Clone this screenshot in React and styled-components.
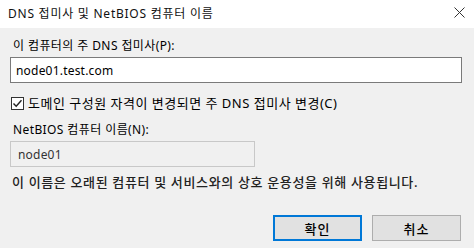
import React from 'react';
import styled, { createGlobalStyle } from 'styled-components';

const GlobalStyle = createGlobalStyle`
  html, body {
    margin: 0;
    padding: 0;
    background: #f0f0f0;
  }
  body {
    font-family: 'Noto Sans', 'Noto Sans CJK KR', sans-serif;
    font-size: 12px;
    color: #000;
  }
`;

export default function App() {
  return (
    <>
      <GlobalStyle />
      <Window>
        <TitleBar>
          <Title>DNS 접미사 및 NetBIOS 컴퓨터 이름</Title>
          <CloseButton aria-label="닫기">
            <svg width="11" height="11" viewBox="0 0 11 11">
              <path d="M0.5 0.5 L10.5 10.5 M10.5 0.5 L0.5 10.5" stroke="#333" strokeWidth="1" />
            </svg>
          </CloseButton>
        </TitleBar>
        <Body>
          <FieldLabel>이 컴퓨터의 주 DNS 접미사(P):</FieldLabel>
          <TextField readOnly value="node01.test.com" />
          <CheckRow>
            <CheckBox>
              <svg width="11" height="11" viewBox="0 0 11 11">
                <path d="M1.5 5.5 L4.2 8.3 L9.5 2.2" stroke="#222" strokeWidth="1.4" fill="none" />
              </svg>
            </CheckBox>
            <span>도메인 구성원 자격이 변경되면 주 DNS 접미사 변경(C)</span>
          </CheckRow>
          <FieldLabel $top={11}>NetBIOS 컴퓨터 이름(N):</FieldLabel>
          <TextField readOnly disabled value="node01" $disabled />
          <Note>이 이름은 오래된 컴퓨터 및 서비스와의 상호 운용성을 위해 사용됩니다.</Note>
          <ButtonRow>
            <DialogButton $primary>확인</DialogButton>
            <DialogButton>취소</DialogButton>
          </ButtonRow>
        </Body>
      </Window>
    </>
  );
}

const Window = styled.div`
  width: 474px;
  height: 248px;
  background: #f0f0f0;
  display: flex;
  flex-direction: column;
  overflow: hidden;
`;

const TitleBar = styled.div`
  height: 28px;
  background: #fff;
  display: flex;
  align-items: center;
  justify-content: space-between;
  padding: 0 9px 3px 8px;
  box-sizing: border-box;
`;

const Title = styled.span`
  font-size: 12px;
  letter-spacing: 0.75px;
  color: #111;
`;

const CloseButton = styled.div`
  width: 11px;
  height: 11px;
  display: flex;
`;

const Body = styled.div`
  display: flex;
  flex-direction: column;
  align-items: flex-start;
  padding: 10px 12px 0 10px;
`;

const FieldLabel = styled.div`
  margin-top: ${(props) => props.$top || 0}px;
  padding-left: 3px;
  line-height: 16px;
  letter-spacing: 0.4px;
`;

const TextField = styled.input`
  margin-top: 3px;
  box-sizing: border-box;
  width: ${(props) => (props.$disabled ? '245px' : '452px')};
  height: 26px;
  padding: 0 ${(props) => (props.$disabled ? '7px' : '5px')};
  border: 1px solid ${(props) => (props.$disabled ? '#c8c8c8' : '#7a7a7a')};
  background: ${(props) => (props.$disabled ? '#f0f0f0' : '#fff')};
  font-family: 'Noto Sans', 'Noto Sans CJK KR', sans-serif;
  font-size: 12px;
  letter-spacing: 0.2px;
  color: ${(props) => (props.$disabled ? '#333' : '#000')};
  outline: none;
`;

const CheckRow = styled.label`
  margin-top: 12px;
  display: flex;
  align-items: center;
  gap: 4px;
  padding-left: 1px;
  line-height: 16px;
  font-size: 13px;
  letter-spacing: 0.5px;
`;

const CheckBox = styled.span`
  width: 13px;
  height: 13px;
  box-sizing: border-box;
  border: 1px solid #333;
  background: #fff;
  display: flex;
  align-items: center;
  justify-content: center;
`;

const Note = styled.div`
  margin-top: 7px;
  padding-left: 2px;
  line-height: 16px;
  font-size: 13px;
  font-weight: 500;
  letter-spacing: 0.65px;
  color: #222;
`;

const ButtonRow = styled.div`
  align-self: stretch;
  margin-top: 25px;
  display: flex;
  justify-content: flex-end;
  gap: 10px;
  padding-right: 1px;
`;

const DialogButton = styled.button`
  width: 89px;
  height: 26px;
  box-sizing: border-box;
  background: #e1e1e1;
  border: ${(props) => (props.$primary ? '2px solid #0078d7' : '1px solid #adadad')};
  font-family: 'Noto Sans', 'Noto Sans CJK KR', sans-serif;
  font-size: 13px;
  font-weight: 500;
  letter-spacing: 1px;
  color: #000;
  padding: 0;
`;
